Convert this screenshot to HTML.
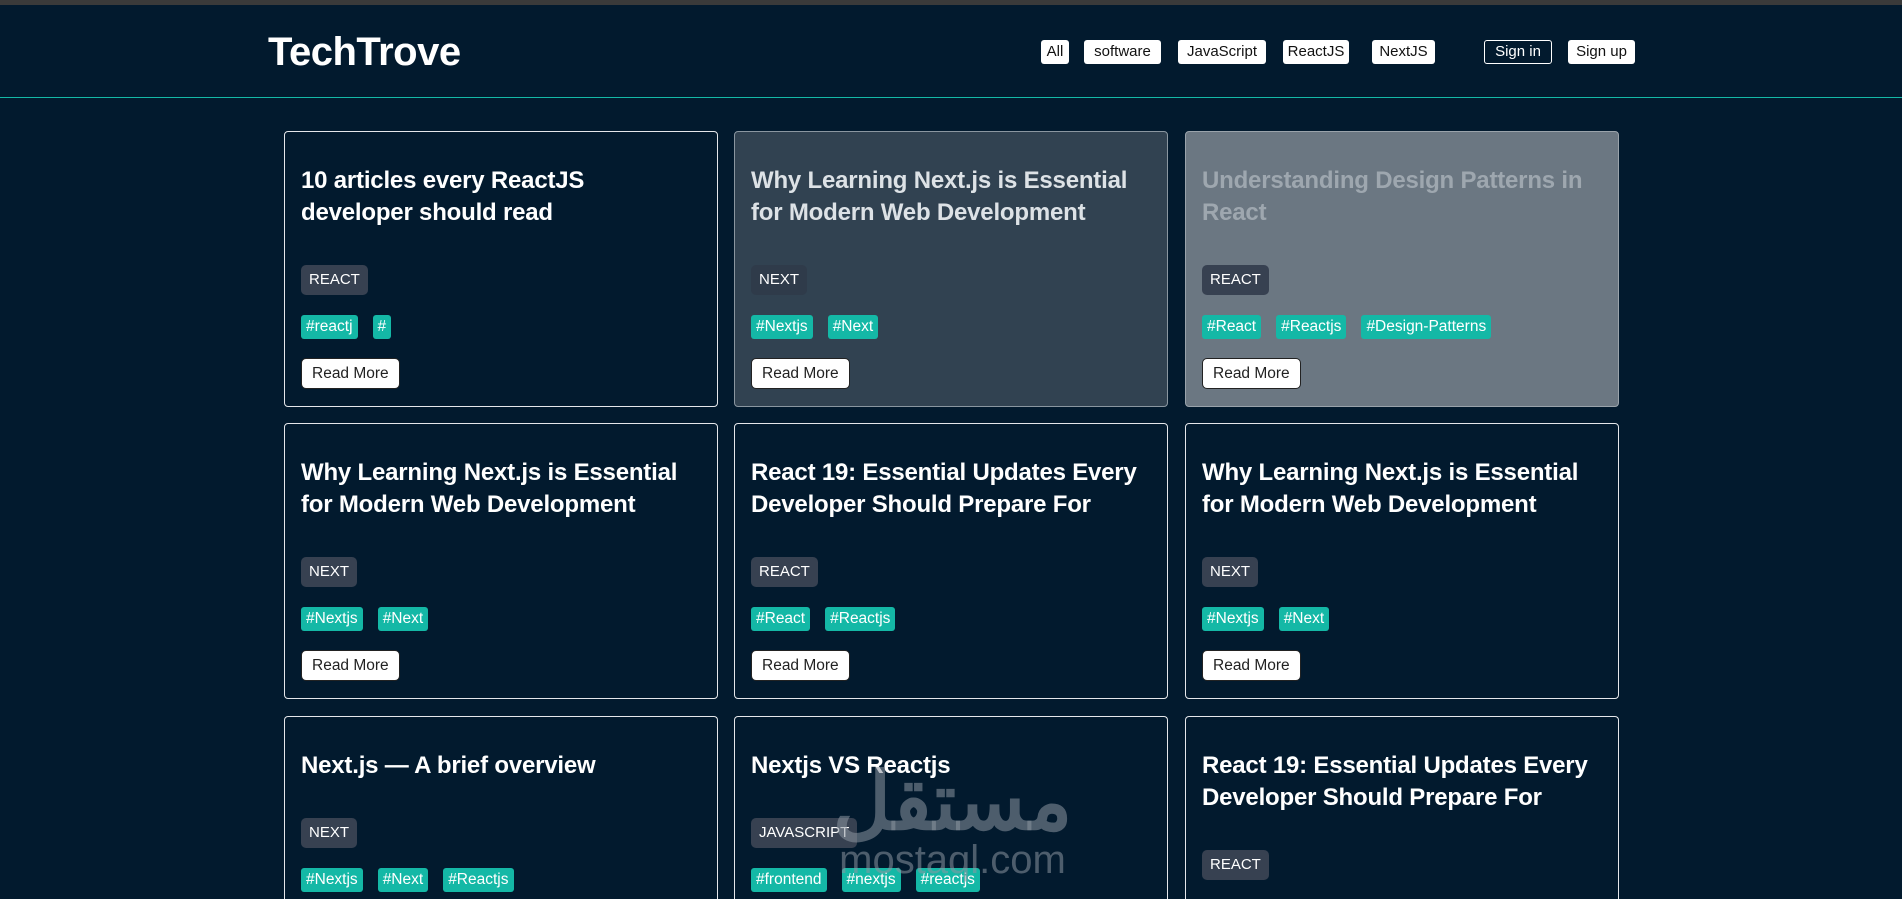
<!DOCTYPE html>
<html style="height:899px;overflow:hidden"><head><meta charset="utf-8"><style>
*{box-sizing:border-box;margin:0;padding:0}
body{width:1902px;height:899px;overflow:hidden;background:#021a2e;font-family:"Liberation Sans",sans-serif;color:#fff;position:relative}
.topbar{height:5px;background:#3a3a3a}
header{height:93px;border-bottom:1px solid #14b8a6;position:relative}
.logo{position:absolute;left:268px;top:25px;font-size:40px;font-weight:bold;letter-spacing:-0.5px}
.nb{position:absolute;top:35px;height:24px;background:#fff;color:#111;font-size:15px;line-height:24px;text-align:center;border-radius:3px}
.nb.dark{background:#021a2e;color:#fff;border:1px solid #fff;line-height:22px}
.card{position:absolute;width:434px;height:276px;border:1px solid #e5e7eb;border-radius:4px;padding:33px 16px 0 16px;background:#021a2e}
.card.last{height:183px;border-bottom:none;border-radius:4px 4px 0 0}
.card h2{font-size:24px;line-height:32px;font-weight:bold;letter-spacing:-0.2px}
.badge{display:inline-block;margin-top:36px;height:30px;line-height:30px;padding:0 8px;background:#374151;border-radius:5px;font-size:15px}
.tags{margin-top:20px;height:24px}
.tag{display:inline-block;height:24px;line-height:24px;padding:0 5px;background:#14b8a6;border-radius:3px;font-size:15.5px;margin-right:15px}
.rm{display:inline-block;margin-top:19px;height:31px;line-height:29px;padding:0 10px;background:#fff;color:#222;border:1px solid #222;border-radius:5px;font-size:15.5px}
.wm{position:absolute;left:830px;width:245px;text-align:center;color:rgba(140,150,160,0.55);font-weight:bold}
</style></head><body>
<div class="topbar"></div>
<header>
<div class="logo">TechTrove</div>
<div class="nb" style="left:1041px;width:28px">All</div>
<div class="nb" style="left:1084px;width:77px">software</div>
<div class="nb" style="left:1178px;width:88px">JavaScript</div>
<div class="nb" style="left:1283px;width:66px">ReactJS</div>
<div class="nb" style="left:1372px;width:63px">NextJS</div>
<div class="nb dark" style="left:1484px;width:68px">Sign in</div>
<div class="nb" style="left:1568px;width:67px">Sign up</div>
</header>

<div class="card" style="left:284px;top:131px"><h2>10 articles every ReactJS developer should read</h2><div class="badge">REACT</div><div class="tags"><span class="tag">#reactj</span><span class="tag">#</span></div><div class="rm">Read More</div></div>
<div class="card" style="left:734px;top:131px;background:#314251;border-color:#8a96a0"><h2 style="color:#dde2e6">Why Learning Next.js is Essential for Modern Web Development</h2><div class="badge" style="background:#2f3b4a">NEXT</div><div class="tags"><span class="tag">#Nextjs</span><span class="tag">#Next</span></div><div class="rm">Read More</div></div>
<div class="card" style="left:1185px;top:131px;background:#6b7782;border-color:#9aa3ab"><h2 style="color:#9ea7af">Understanding Design Patterns in React</h2><div class="badge">REACT</div><div class="tags"><span class="tag">#React</span><span class="tag">#Reactjs</span><span class="tag">#Design-Patterns</span></div><div class="rm">Read More</div></div>

<div class="card" style="left:284px;top:423px"><h2>Why Learning Next.js is Essential for Modern Web Development</h2><div class="badge">NEXT</div><div class="tags"><span class="tag">#Nextjs</span><span class="tag">#Next</span></div><div class="rm">Read More</div></div>
<div class="card" style="left:734px;top:423px"><h2>React 19: Essential Updates Every Developer Should Prepare For</h2><div class="badge">REACT</div><div class="tags"><span class="tag">#React</span><span class="tag">#Reactjs</span></div><div class="rm">Read More</div></div>
<div class="card" style="left:1185px;top:423px"><h2>Why Learning Next.js is Essential for Modern Web Development</h2><div class="badge">NEXT</div><div class="tags"><span class="tag">#Nextjs</span><span class="tag">#Next</span></div><div class="rm">Read More</div></div>

<div class="card last" style="left:284px;top:716px"><h2>Next.js — A brief overview</h2><div class="badge">NEXT</div><div class="tags"><span class="tag">#Nextjs</span><span class="tag">#Next</span><span class="tag">#Reactjs</span></div></div>
<div class="card last" style="left:734px;top:716px"><h2>Nextjs VS Reactjs</h2><div class="badge">JAVASCRIPT</div><div class="tags"><span class="tag">#frontend</span><span class="tag">#nextjs</span><span class="tag">#reactjs</span></div></div>
<div class="card last" style="left:1185px;top:716px"><h2>React 19: Essential Updates Every Developer Should Prepare For</h2><div class="badge">REACT</div></div>

<div class="wm" style="top:754px;font-size:80px;line-height:96px;font-family:'Liberation Sans','Noto Sans CJK SC',sans-serif">مستقل</div>
<div class="wm" style="top:842px;font-size:40px;line-height:36px;font-weight:normal">mostaql.com</div>
</body></html>
